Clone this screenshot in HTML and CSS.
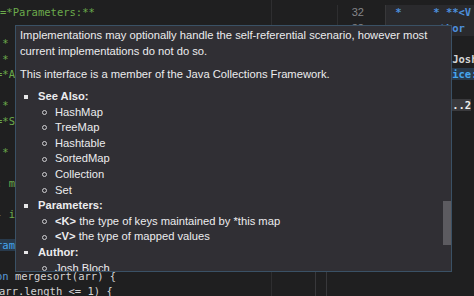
FILE: index.html
```html
<!DOCTYPE html>
<html>
<head>
<meta charset="utf-8">
<link rel="stylesheet" href="styles.css">
</head>
<body>
<div class="editor">
  <div class="pane left">
    <div class="ln shift"><span class="cm">=*Parameters:**</span></div>
    <div class="ln"></div>
    <div class="ln"><span class="cm"> *</span></div>
    <div class="ln"><span class="cm"> *</span></div>
    <div class="ln"><span class="cm">=*A</span></div>
    <div class="ln"></div>
    <div class="ln"><span class="cm"> *</span></div>
    <div class="ln"><span class="cm">=*S</span></div>
    <div class="ln"></div>
    <div class="ln"><span class="cm"> *</span></div>
    <div class="ln"></div>
    <div class="ln"><span class="dim">:</span> <span class="cm">m</span></div>
    <div class="ln"></div>
    <div class="ln"><span class="dim">-</span> <span class="cm">i</span></div>
    <div class="ln"></div>
    <div class="ln"><span class="hl">ram</span></div>
    <div class="ln"></div>
    <div class="ln"><span class="kw">on</span> mergesort(arr) {</div>
    <div class="ln nudge">arr.length &lt;= 1) {</div>
  </div>
  <div class="mid">
    <div class="guides"></div>
  </div>
  <div class="side">
    <div class="gutter">
      <div class="num">32</div>
      <div class="num">33</div>
    </div>
    <div class="pane right">
      <div class="ln lit"><span class="bl"> *     * **&lt;V</span></div>
      <div class="ln lit"><span class="bl">       uthor</span></div>
      <div class="ln"></div>
      <div class="ln">          Josh</div>
      <div class="ln">          <span class="hl">ice:</span></div>
      <div class="ln"></div>
      <div class="ln">          <span class="box">..2</span></div>
    </div>
  </div>
</div>

<div class="hover">
  <div class="doc">
    <p>Implementations may optionally handle the self-referential scenario, however most current implementations do not do so.</p>
    <p class="p2">This interface is a member of the Java Collections Framework.</p>
    <ul class="outer">
      <li><b>See Also:</b>
        <ul class="inner">
          <li>HashMap</li>
          <li>TreeMap</li>
          <li>Hashtable</li>
          <li>SortedMap</li>
          <li>Collection</li>
          <li>Set</li>
        </ul>
      </li>
      <li><b>Parameters:</b>
        <ul class="inner">
          <li><b>&lt;K&gt;</b> the type of keys maintained by *this map</li>
          <li><b>&lt;V&gt;</b> the type of mapped values</li>
        </ul>
      </li>
      <li><b>Author:</b>
        <ul class="inner">
          <li>Josh Bloch</li>
        </ul>
      </li>
    </ul>
  </div>
  <div class="thumb"></div>
</div>
</body>
</html>
```
FILE: styles.css
```css
html, body {
  margin: 0;
  padding: 0;
  background: #1f1f20;
  width: 474px;
  height: 296px;
  overflow: hidden;
}

.editor {
  display: flex;
  height: 296px;
  font-family: "DejaVu Sans Mono", "Liberation Mono", monospace;
  font-size: 10.5px;
  color: #d4d4d4;
}

.left {
  width: 272px;
  flex: none;
  padding-top: 5.25px;
  border-right: 1px solid #2e2e30;
  box-sizing: border-box;
  overflow: hidden;
}

.ln {
  height: 15.5px;
  line-height: 15.5px;
  white-space: pre;
}

.left .ln {
  margin-left: -4px;
}

.left .shift {
  padding-left: 4px;
}

.left .nudge {
  padding-left: 3px;
}

.mid {
  width: 65px;
  flex: none;
  display: flex;
  flex-direction: column;
  justify-content: flex-end;
}

.guides {
  height: 24px;
  margin-left: 43px;
  width: 10px;
  border-left: 1px solid #38383b;
  border-right: 1px solid #38383b;
}

.side {
  display: flex;
  flex: 1;
  height: 122px;
  padding-top: 5.25px;
  box-sizing: border-box;
}

.gutter {
  width: 49px;
  flex: none;
  border-left: 1px solid #2e2e30;
  border-right: 1px solid #38383a;
  box-sizing: border-box;
  text-align: right;
  padding-right: 21px;
  color: #86868a;
  font-family: "Liberation Sans", sans-serif;
  font-size: 11px;
}

.num {
  height: 15.5px;
  line-height: 15.5px;
}

.right {
  flex: 1;
  padding-left: 3px;
  overflow: hidden;
  font-weight: bold;
}

.right .lit {
  background: #2a2a2d;
  margin-left: -3px;
  padding-left: 3px;
}

.cm { color: #6cab4c; }
.dim { color: #6f7a68; }
.kw { color: #5a9ad6; }
.bl { color: #4d8fdc; }
.hl {
  color: #46a6ee;
  background: #283a4c;
}
.box {
  background: #3a3a3d;
  color: #eeeeee;
}

.hover {
  position: absolute;
  left: 15px;
  top: 25px;
  width: 437px;
  height: 247px;
  box-sizing: border-box;
  border: 1px solid #3a5165;
  background: #302f34;
  overflow: hidden;
  font-family: "Liberation Sans", Arial, sans-serif;
  font-size: 11.2px;
  color: #ececee;
}

.doc {
  padding: 1px 0 0 4px;
}

.doc p {
  margin: 0;
  line-height: 16px;
}

.doc .p2 {
  margin-top: 7px;
}

.doc ul {
  list-style: none;
  margin: 0;
}

.outer {
  margin-top: 7px !important;
  padding-left: 18px;
}

.inner {
  padding-left: 17px;
}

.doc li {
  position: relative;
  line-height: 15.6px;
}

.outer > li::before {
  content: "";
  position: absolute;
  left: -14px;
  top: 6px;
  width: 3.5px;
  height: 3.5px;
  background: #e6e6e8;
}

.inner > li::before {
  content: "";
  position: absolute;
  left: -13.5px;
  top: 5.3px;
  width: 3px;
  height: 3px;
  border: 1px solid #cfcfd2;
  border-radius: 50%;
}

.thumb {
  position: absolute;
  right: 0;
  top: 175px;
  width: 8px;
  height: 44px;
  background: #5c5b60;
}
```
